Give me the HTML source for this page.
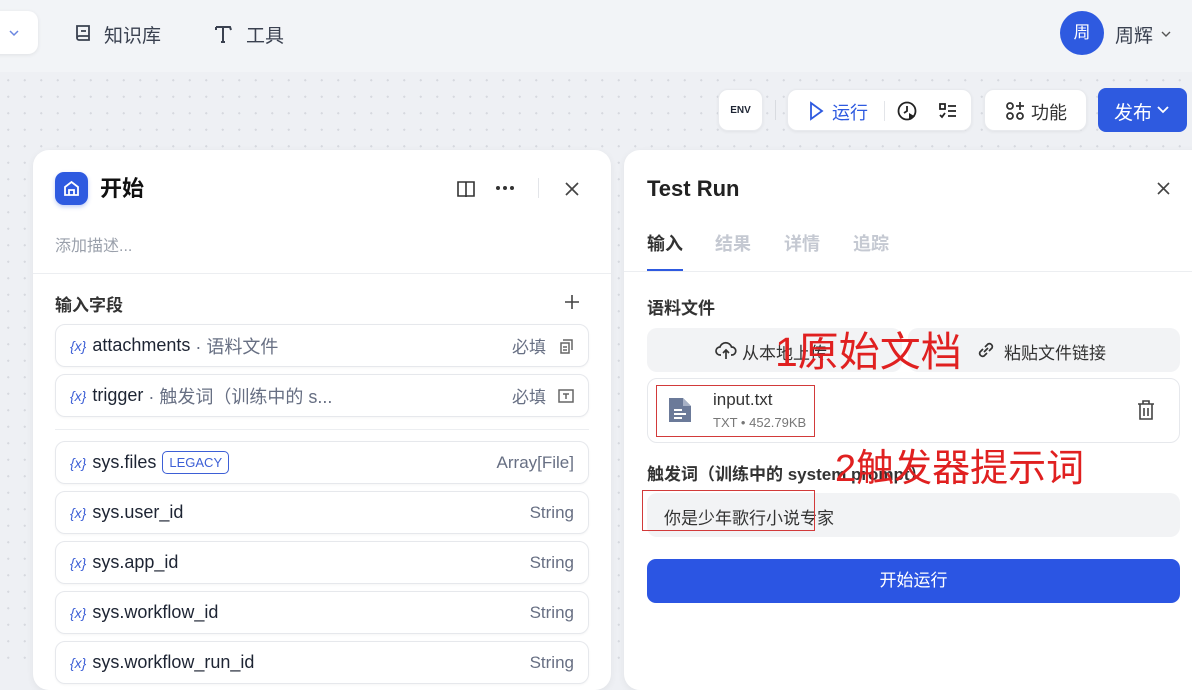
<!DOCTYPE html>
<html><head><meta charset="utf-8"><style>
*{box-sizing:border-box;margin:0;padding:0}
body{width:1192px;height:672px;overflow:hidden;background:#eef0f4;font-family:"Liberation Sans","Noto Sans CJK SC",sans-serif;color:#1d2433;position:relative}
.canvas{position:absolute;left:0;top:72px;width:1192px;height:600px;background-color:#eef0f4;background-image:radial-gradient(#d6d9df 1px,transparent 1.2px);background-size:16.5px 16.5px}
.hdr{position:absolute;left:0;top:0;width:1192px;height:72px;background:#f2f4f7}
.abs{position:absolute}
.card{position:absolute;background:#fff;border-radius:10px;box-shadow:0 1px 3px rgba(0,0,0,.06);border:1px solid #e8eaee}
.panel{position:absolute;background:#fff;border-radius:16px;box-shadow:0 2px 8px rgba(0,0,0,.06)}
.row{position:absolute;left:22px;width:534px;height:43px;border:1px solid #e6e8ec;border-radius:10px;box-shadow:0 1px 2px rgba(0,0,0,.04);font-size:18px;display:flex;align-items:center;padding-left:14px}
.x{color:#3d5fd6;font-size:14px;margin-right:6px;font-style:italic}
.r{position:absolute;right:14px;color:#676f83;font-size:17px;display:flex;align-items:center;gap:12px}
.tab{position:absolute;font-size:18px;font-weight:bold;color:#c5c9d2}
.red{position:absolute;color:#e02020;font-size:41px;line-height:1}
.box{position:absolute;border:1px solid #d23a3a}
</style></head><body>
<div class="hdr">
 <div class="abs" style="left:-20px;top:11px;width:58px;height:43px;background:#fff;border-radius:10px;box-shadow:0 1px 4px rgba(0,0,0,.08)"></div>
 <svg class="abs" style="left:8px;top:28px" width="12" height="10"><path d="M2 3l4 4 4-4" stroke="#6b87e0" stroke-width="1.5" fill="none"/></svg>
 <svg class="abs" style="left:73px;top:24px" width="20" height="20"><path d="M4 2h12v14H6a2 2 0 0 1-2-2zM4 14a2 2 0 0 1 2-2h10M8 7h5" stroke="#3a4150" stroke-width="1.8" fill="none"/></svg>
 <div class="abs" style="left:104px;top:21px;font-size:19px;color:#3a4150">知识库</div>
 <svg class="abs" style="left:213px;top:23px" width="22" height="22"><path d="M3 4h14l1 3M10 4v15M8 19h4M3 4v3" stroke="#3a4150" stroke-width="2" fill="none"/></svg>
 <div class="abs" style="left:246px;top:21px;font-size:19px;color:#3a4150">工具</div>
 <div class="abs" style="left:1060px;top:11px;width:44px;height:44px;border-radius:50%;background:#2e5ae0;color:#fff;font-size:17px;text-align:center;line-height:44px">周</div>
 <div class="abs" style="left:1115px;top:21px;font-size:19px;color:#3a4150">周辉</div>
 <svg class="abs" style="left:1161px;top:30px" width="10" height="8"><path d="M1 2l4 4 4-4" stroke="#555" stroke-width="1.4" fill="none"/></svg>
</div>
<div class="canvas"></div>

<div class="card" style="left:718px;top:89px;width:45px;height:42px;display:flex;align-items:center;justify-content:center;font-size:10px;font-weight:bold">ENV</div>
<div class="abs" style="left:775px;top:100px;width:1px;height:20px;background:#d8dbe0"></div>
<div class="card" style="left:787px;top:89px;width:185px;height:42px">
 <svg class="abs" style="left:20px;top:11px" width="16" height="20"><path d="M3 2l11 8-11 8z" stroke="#2e5ae0" stroke-width="1.8" fill="none"/></svg>
 <div class="abs" style="left:44px;top:9px;font-size:18px;color:#2e5ae0">运行</div>
 <div class="abs" style="left:96px;top:11px;width:1px;height:20px;background:#e3e5e9"></div>
 <svg class="abs" style="left:108px;top:10px" width="22" height="22"><circle cx="11" cy="11" r="8.5" stroke="#222" stroke-width="1.8" fill="none"/><path d="M11 6v5l-3 2" stroke="#222" stroke-width="1.8" fill="none"/><path d="M13 13l6 3.5-6 3.5z" fill="#222"/></svg>
 <svg class="abs" style="left:150px;top:11px" width="20" height="20"><path d="M2 3h5v5H2zM10 5h8M10 10h8M10 15h8M2 14l2 2 3-4" stroke="#222" stroke-width="1.8" fill="none"/></svg>
</div>
<div class="card" style="left:984px;top:89px;width:103px;height:42px">
 <svg class="abs" style="left:20px;top:11px" width="20" height="20"><circle cx="5" cy="5" r="3" stroke="#333" stroke-width="1.8" fill="none"/><circle cx="5" cy="15" r="3" stroke="#333" stroke-width="1.8" fill="none"/><circle cx="15" cy="15" r="3" stroke="#333" stroke-width="1.8" fill="none"/><path d="M15 1v8M11 5h8" stroke="#333" stroke-width="1.8"/></svg>
 <div class="abs" style="left:46px;top:9px;font-size:18px;color:#333">功能</div>
</div>
<div class="abs" style="left:1098px;top:88px;width:89px;height:44px;background:#2e5ae0;border-radius:8px;color:#fff;font-size:19px;padding:10px 0 0 16px">发布</div>
<svg class="abs" style="left:1157px;top:105px" width="12" height="9"><path d="M1 2l5 5 5-5" stroke="#fff" stroke-width="1.8" fill="none"/></svg>

<!-- left panel -->
<div class="panel" style="left:33px;top:150px;width:578px;height:540px">
 <div class="abs" style="left:22px;top:22px;width:33px;height:33px;border-radius:9px;background:#2e5ae0;box-shadow:0 2px 4px rgba(46,90,224,.3)"></div>
 <svg class="abs" style="left:30px;top:30px" width="17" height="17"><path d="M2 7l6.5-5 6.5 5v8H2zM6 15V10h5v5" stroke="#fff" stroke-width="1.8" fill="none"/></svg>
 <div class="abs" style="left:67px;top:24px;font-size:22px;font-weight:bold;color:#111;line-height:30px">开始</div>
 <svg class="abs" style="left:423px;top:29px" width="20" height="20"><path d="M2 3h16v14H2zM10 3v15" stroke="#333" stroke-width="1.6" fill="none"/></svg>
 <svg class="abs" style="left:462px;top:35px" width="20" height="6"><circle cx="3" cy="3" r="2" fill="#333"/><circle cx="10" cy="3" r="2" fill="#333"/><circle cx="17" cy="3" r="2" fill="#333"/></svg>
 <div class="abs" style="left:505px;top:28px;width:1px;height:20px;background:#e3e5e9"></div>
 <svg class="abs" style="left:532px;top:32px" width="14" height="14"><path d="M1 1l12 12M13 1L1 13" stroke="#444" stroke-width="1.7"/></svg>
 <div class="abs" style="left:22px;top:82px;font-size:16px;color:#9aa0ab">添加描述...</div>
 <div class="abs" style="left:0;top:123px;width:578px;height:1px;background:#eceef1"></div>
 <div class="abs" style="left:22px;top:141px;font-size:17px;font-weight:bold;color:#333">输入字段</div>
 <svg class="abs" style="left:531px;top:144px" width="16" height="16"><path d="M8 1v14M1 8h14" stroke="#444" stroke-width="1.6"/></svg>
 <div class="row" style="top:174px"><span class="x">{x}</span>attachments<span style="color:#676f83">&nbsp;· 语料文件</span><span class="r">必填 <svg width="16" height="16"><path d="M5 2h9v10M3 5h8v10H3zM5 9h4M5 12h4" stroke="#666" stroke-width="1.5" fill="none"/></svg></span></div>
 <div class="row" style="top:224px"><span class="x">{x}</span>trigger<span style="color:#676f83">&nbsp;· 触发词（训练中的 s...</span><span class="r">必填 <svg width="16" height="16"><path d="M1 2h14v12H1zM5 6h6M8 6v5" stroke="#666" stroke-width="1.5" fill="none"/></svg></span></div>
 <div class="abs" style="left:22px;top:279px;width:534px;height:1px;background:#eceef1"></div>
 <div class="row" style="top:291px"><span class="x">{x}</span>sys.files<span style="margin-left:6px;border:1px solid #3d5fd6;color:#3d5fd6;border-radius:5px;font-size:13px;padding:3px 6px">LEGACY</span><span class="r">Array[File]</span></div>
 <div class="row" style="top:341px"><span class="x">{x}</span>sys.user_id<span class="r">String</span></div>
 <div class="row" style="top:391px"><span class="x">{x}</span>sys.app_id<span class="r">String</span></div>
 <div class="row" style="top:441px"><span class="x">{x}</span>sys.workflow_id<span class="r">String</span></div>
 <div class="row" style="top:491px"><span class="x">{x}</span>sys.workflow_run_id<span class="r">String</span></div>
</div>

<!-- right panel -->
<div class="panel" style="left:624px;top:150px;width:590px;height:540px">
 <div class="abs" style="left:23px;top:26px;font-size:22px;font-weight:bold;color:#222">Test Run</div>
 <svg class="abs" style="left:533px;top:32px" width="13" height="13"><path d="M1 1l11 11M12 1L1 12" stroke="#444" stroke-width="1.6"/></svg>
 <div class="tab" style="left:23px;color:#333;top:80px">输入</div>
 <div class="tab" style="left:91px;top:80px">结果</div>
 <div class="tab" style="left:160px;top:80px">详情</div>
 <div class="tab" style="left:229px;top:80px">追踪</div>
 <div class="abs" style="left:23px;top:119px;width:36px;height:3px;background:#2e5ae0"></div>
 <div class="abs" style="left:0;top:121px;width:590px;height:1px;background:#eceef1"></div>
 <div class="abs" style="left:23px;top:144px;font-size:17px;font-weight:bold;color:#333">语料文件</div>
 <div class="abs" style="left:23px;top:178px;width:255px;height:44px;background:#f2f3f5;border-radius:10px"></div>
 <div class="abs" style="left:284px;top:178px;width:272px;height:44px;background:#f2f3f5;border-radius:10px"></div>
 <svg class="abs" style="left:91px;top:189px" width="22" height="22"><path d="M6 16H5a4 4 0 0 1 0-8 6 6 0 0 1 11.5 0A4 4 0 0 1 17 16h-1M11 11v9M8 14l3-3 3 3" stroke="#333" stroke-width="1.7" fill="none"/></svg>
 <div class="abs" style="left:118px;top:189px;font-size:17px;color:#333">从本地上传</div>
 <svg class="abs" style="left:352px;top:190px" width="20" height="20"><path d="M8 12l4-4M7 9l-3 3a3 3 0 0 0 4 4l3-3M13 11l3-3a3 3 0 0 0-4-4L9 7" stroke="#333" stroke-width="1.7" fill="none"/></svg>
 <div class="abs" style="left:380px;top:189px;font-size:17px;color:#333">粘贴文件链接</div>
 <div class="abs" style="left:23px;top:228px;width:533px;height:65px;border:1px solid #e6e8ec;border-radius:10px"></div>
 <svg class="abs" style="left:44px;top:246px" width="24" height="28"><path d="M1 2h14l8 8v16H1z" fill="#6b7a99"/><path d="M15 2v8h8" fill="#a7b1c6"/><path d="M6 14h8M6 18h12M6 22h8" stroke="#fff" stroke-width="2"/></svg>
 <div class="abs" style="left:89px;top:240px;font-size:17px;color:#333">input.txt</div>
 <div class="abs" style="left:89px;top:265px;font-size:13px;color:#777">TXT • 452.79KB</div>
 <svg class="abs" style="left:513px;top:250px" width="18" height="20"><path d="M1 4h16M6 4V1h6v3M3 4v15h12V4M7 8v8M11 8v8" stroke="#444" stroke-width="1.6" fill="none"/></svg>
 <div class="abs" style="left:23px;top:310px;font-size:17px;font-weight:bold;color:#333">触发词（训练中的 system prompt）</div>
 <div class="abs" style="left:23px;top:343px;width:533px;height:44px;background:#f2f3f5;border-radius:10px;font-size:17px;color:#333;padding:11px 0 0 17px">你是少年歌行小说专家</div>
 <div class="abs" style="left:23px;top:409px;width:533px;height:44px;background:#2b55e3;border-radius:9px;color:#fff;font-size:17px;text-align:center;line-height:44px">开始运行</div>
</div>

<div class="red" style="left:775px;top:332px">1原始文档</div>
<div class="red" style="left:835px;top:450px;font-size:38px">2触发器提示词</div>
<div class="box" style="left:656px;top:385px;width:159px;height:52px"></div>
<div class="box" style="left:642px;top:490px;width:173px;height:41px"></div>
</body></html>
